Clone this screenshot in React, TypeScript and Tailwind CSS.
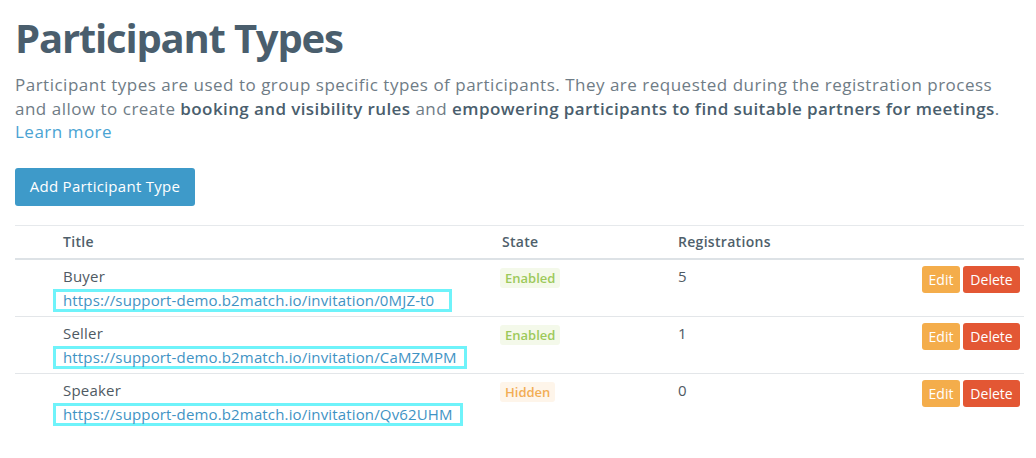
import React from 'react';

type Row = {
  title: string;
  url: string;
  state: 'Enabled' | 'Hidden';
  registrations: number;
  boxWidth: string;
};

const rows: Row[] = [
  { title: 'Buyer', url: 'https://support-demo.b2match.io/invitation/0MJZ-t0', state: 'Enabled', registrations: 5, boxWidth: 'w-[399px]' },
  { title: 'Seller', url: 'https://support-demo.b2match.io/invitation/CaMZMPM', state: 'Enabled', registrations: 1, boxWidth: 'w-[414px]' },
  { title: 'Speaker', url: 'https://support-demo.b2match.io/invitation/Qv62UHM', state: 'Hidden', registrations: 0, boxWidth: 'w-[410px]' },
];

const App: React.FC = () => {
  return (
    <div className="min-h-screen bg-white px-[15px] pt-[14px] text-[#4b5d6b]" style={{ fontFamily: '"Open Sans", Lato, sans-serif' }}>
      <h1 className="text-[40px] font-bold leading-[48px] tracking-[-1.2px] text-[#4a5e6d]">Participant Types</h1>

      <p className="mt-[11px] whitespace-nowrap text-[17px] leading-[23.5px] tracking-[0.5px] text-[#6f7c86]">
        Participant types are used to group specific types of participants. They are requested during the registration process
        <br />
        and allow to create <span className="font-semibold tracking-[0.4px] text-[#4a5e6d]">booking and visibility rules</span> and{' '}
        <span className="font-semibold tracking-[0.4px] text-[#4a5e6d]">empowering participants to find suitable partners for meetings</span>.
        <br />
        <a className="text-[#4aa3d3]">Learn more</a>
      </p>

      <button className="mt-[24px] h-[38px] w-[180px] rounded-[3px] bg-[#3e9ac9] text-[15px] tracking-[0.3px] text-white">
        Add Participant Type
      </button>

      <div className="mt-[19px] w-[1009px] border-t border-[#e6e9ec]">
        {/* header */}
        <div className="grid h-[34px] grid-cols-[48px_439px_176px_1fr_auto] items-center border-b-2 border-[#dde2e6] text-[14px] font-semibold tracking-[0.3px] text-[#4f5f6b]">
          <div />
          <div>Title</div>
          <div>State</div>
          <div>Registrations</div>
          <div />
        </div>

        {rows.map((row, i) => (
          <div
            key={row.title}
            className={`grid h-[57px] grid-cols-[48px_439px_176px_1fr_auto] items-start ${i < rows.length - 1 ? 'border-b border-[#e3e6e9]' : ''}`}
          >
            <div />
            <div className="pt-[6px]">
              <div className="text-[15px] leading-[21px] tracking-[0.2px] text-[#4f5a63]">{row.title}</div>
              <div className={`-ml-[10px] mt-[2px] h-[23px] ${row.boxWidth} whitespace-nowrap border-[3px] border-[#6ff3fa] pl-[7px] text-[15px] leading-[17px] tracking-[0.15px] text-[#3f93c4]`}>
                {row.url}
              </div>
            </div>
            <div className="pt-[5px]">
              <span
                className={`-ml-[2px] inline-block h-[20px] rounded-[3px] px-[5px] text-[13px] font-semibold leading-[20px] ${
                  row.state === 'Enabled' ? 'bg-[#f4f9ea] text-[#9dc95a]' : 'bg-[#fef5ea] text-[#f2ad55]'
                }`}
              >
                {row.state}
              </span>
            </div>
            <div className="pt-[6px] text-[15px] leading-[21px] text-[#4f5a63]">{row.registrations}</div>
            <div className="flex gap-[3px] pr-[4px] pt-[6px]">
              <button className="h-[27px] w-[38px] rounded-[3px] bg-[#f4ad4b] text-[14px] text-white">Edit</button>
              <button className="h-[27px] w-[57px] rounded-[3px] bg-[#e35734] text-[14px] text-white">Delete</button>
            </div>
          </div>
        ))}
      </div>
    </div>
  );
};

export default App;
